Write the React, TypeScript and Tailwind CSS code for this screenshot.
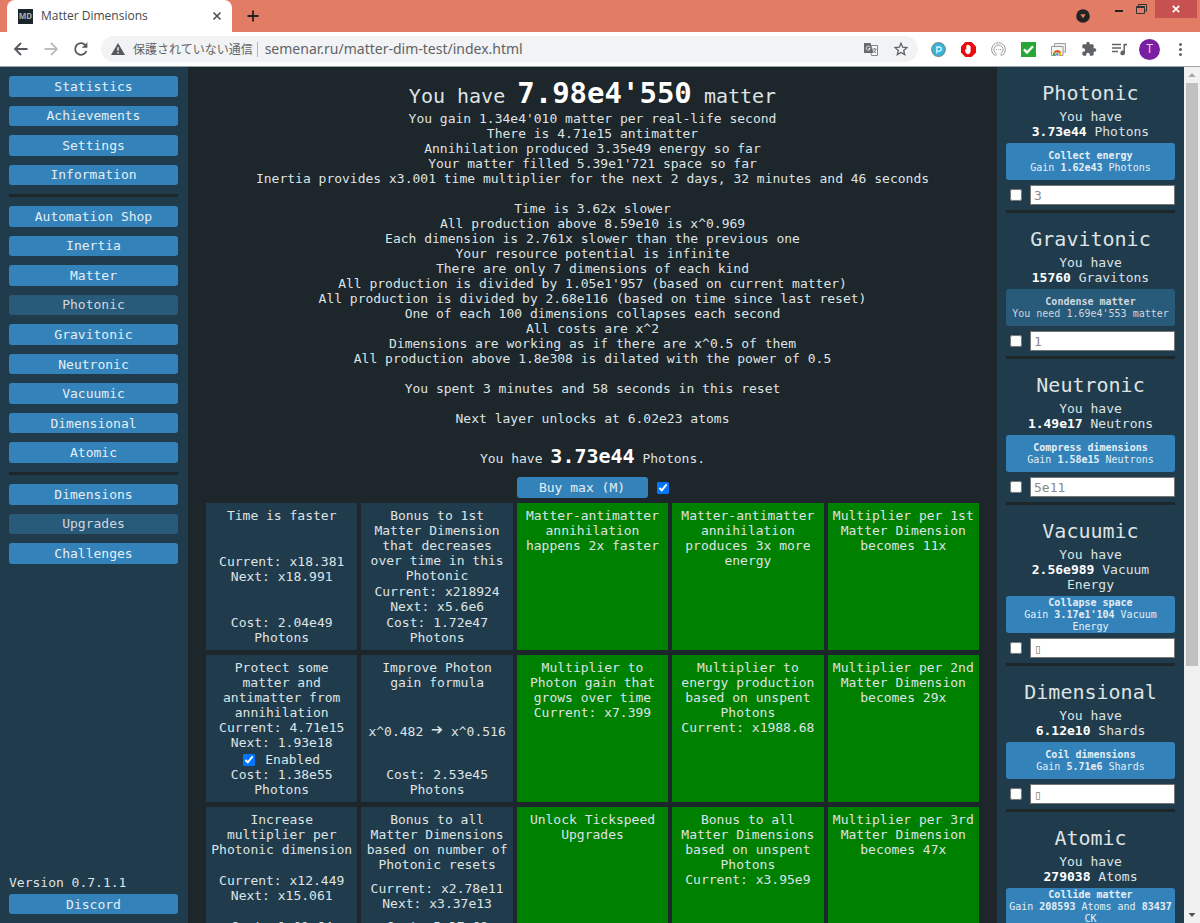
import React, { useState } from 'react';

const MONO = "font-['DejaVu_Sans_Mono','Liberation_Mono',monospace]";

const NAV_GROUPS = [
  { height: 'h-[109px] grid-rows-4', items: ['Statistics', 'Achievements', 'Settings', 'Information'] },
  {
    height: 'h-[257px] grid-rows-9',
    items: ['Automation Shop', 'Inertia', 'Matter', 'Photonic', 'Gravitonic', 'Neutronic', 'Vacuumic', 'Dimensional', 'Atomic'],
  },
  { height: 'h-[80px] grid-rows-3', items: ['Dimensions', 'Upgrades', 'Challenges'] },
];

// currently opened tabs
const ACTIVE = ['Photonic', 'Upgrades'];

const SUMMARY = [
  "You gain 1.34e4'010 matter per real-life second",
  'There is 4.71e15 antimatter',
  'Annihilation produced 3.35e49 energy so far',
  "Your matter filled 5.39e1'721 space so far",
  'Inertia provides x3.001 time multiplier for the next 2 days, 32 minutes and 46 seconds',
];

const EFFECTS = [
  'Time is 3.62x slower',
  'All production above 8.59e10 is x^0.969',
  'Each dimension is 2.761x slower than the previous one',
  'Your resource potential is infinite',
  'There are only 7 dimensions of each kind',
  "All production is divided by 1.05e1'957 (based on current matter)",
  'All production is divided by 2.68e116 (based on time since last reset)',
  'One of each 100 dimensions collapses each second',
  'All costs are x^2',
  'Dimensions are working as if there are x^0.5 of them',
  'All production above 1.8e308 is dilated with the power of 0.5',
];

interface Upgrade {
  title: string;
  effect?: React.ReactNode[];
  toggle?: boolean;
  cost?: string;
}

const UPGRADES: Upgrade[] = [
  { title: 'Time is faster', effect: ['Current: x18.381', 'Next: x18.991'], cost: '2.04e49' },
  { title: 'Bonus to 1st Matter Dimension that decreases over time in this Photonic', effect: ['Current: x218924', 'Next: x5.6e6'], cost: '1.72e47' },
  { title: 'Matter-antimatter annihilation happens 2x faster' },
  { title: 'Matter-antimatter annihilation produces 3x more energy' },
  { title: 'Multiplier per 1st Matter Dimension becomes 11x' },
  { title: 'Protect some matter and antimatter from annihilation', effect: ['Current: 4.71e15', 'Next: 1.93e18'], toggle: true, cost: '1.38e55' },
  { title: 'Improve Photon gain formula', effect: [<>x^0.482 <span className="text-xl font-bold leading-none">➔</span> x^0.516</>], cost: '2.53e45' },
  { title: 'Multiplier to Photon gain that grows over time', effect: ['Current: x7.399'] },
  { title: 'Multiplier to energy production based on unspent Photons', effect: ['Current: x1988.68'] },
  { title: 'Multiplier per 2nd Matter Dimension becomes 29x' },
  { title: 'Increase multiplier per Photonic dimension', effect: ['Current: x12.449', 'Next: x15.061'], cost: '1.01e64' },
  { title: 'Bonus to all Matter Dimensions based on number of Photonic resets', effect: ['Current: x2.78e11', 'Next: x3.37e13'], cost: '5.37e68' },
  { title: 'Unlock Tickspeed Upgrades' },
  { title: 'Bonus to all Matter Dimensions based on unspent Photons', effect: ['Current: x3.95e9'] },
  { title: 'Multiplier per 3rd Matter Dimension becomes 47x' },
];

interface Layer {
  name: string;
  amount: string;
  unit: string;
  action: string;
  detail: React.ReactNode;
  locked?: boolean;
  auto: string;
}

const LAYERS: Layer[] = [
  { name: 'Photonic', amount: '3.73e44', unit: 'Photons', action: 'Collect energy', detail: <>Gain <b>1.62e43</b> Photons</>, auto: '3' },
  { name: 'Gravitonic', amount: '15760', unit: 'Gravitons', action: 'Condense matter', detail: "You need 1.69e4'553 matter", locked: true, auto: '1' },
  { name: 'Neutronic', amount: '1.49e17', unit: 'Neutrons', action: 'Compress dimensions', detail: <>Gain <b>1.58e15</b> Neutrons</>, auto: '5e11' },
  { name: 'Vacuumic', amount: '2.56e989', unit: 'Vacuum Energy', action: 'Collapse space', detail: <>Gain <b>3.17e1'104</b> Vacuum Energy</>, auto: '▯' },
  { name: 'Dimensional', amount: '6.12e10', unit: 'Shards', action: 'Coil dimensions', detail: <>Gain <b>5.71e6</b> Shards</>, auto: '▯' },
  { name: 'Atomic', amount: '279038', unit: 'Atoms', action: 'Collide matter', detail: <>Gain <b>208593</b> Atoms and <b>83437</b> CK</>, auto: '1' },
];

const NavButton: React.FC<{ label: string; active?: boolean; className?: string }> = ({ label, active, className }) => (
  <button className={`flex w-full items-center justify-center rounded-[3px] text-[13px] leading-[15px] ${active ? 'bg-[#285a7a] text-[#d0d8dd]' : 'bg-[#3383ba] text-[#e4eef4]'} ${className || ''}`}>
    {label}
  </button>
);

const Divider = () => <hr className="h-[3px] w-full shrink-0 border-0 bg-[#1c262b]" />;

const TabBar = () => (
  <div className="flex h-8 items-stretch bg-[#e27c65]">
    <div className="ml-[7px] flex w-[225px] items-center rounded-t-lg bg-white pl-[11px] pr-[10px] text-[#45494d]">
      <span className="flex h-[15px] w-[15px] items-center justify-center bg-[#1b262c] text-[8px] font-bold text-[#a9b0b4]">MD</span>
      <span className="ml-2 flex-1 font-['Open_Sans',sans-serif] text-xs">Matter Dimensions</span>
      <button aria-label="Close tab">
        <svg viewBox="0 0 10 10" className="h-[10px] w-[10px]" stroke="#4a4d51" strokeWidth="1.6"><path d="M1.5 1.5l7 7M8.5 1.5l-7 7" /></svg>
      </button>
    </div>
    <button aria-label="New tab" className="ml-[15px] flex items-center">
      <svg viewBox="0 0 12 12" className="h-3 w-3" stroke="#222" strokeWidth="1.8"><path d="M6 .5v11M.5 6h11" /></svg>
    </button>
    <div className="flex-1" />
    <button aria-label="Tab search" className="mr-[22px] flex items-center">
      <svg viewBox="0 0 14 14" className="h-[14px] w-[14px]"><circle cx="7" cy="7" r="6.8" fill="#232323" /><path d="M4.2 5.3h5.6L7 9.2z" fill="#e27c65" /></svg>
    </button>
    <div className="flex h-[18px] items-center">
      <button aria-label="Minimize" className="flex h-full w-[13px] items-end justify-center pb-[6px]">
        <span className="h-[2px] w-2 bg-[#222]" />
      </button>
      <button aria-label="Restore" className="ml-[11px] mr-[8px] flex items-center">
        <svg viewBox="0 0 11 10" className="h-[10px] w-[11px]" fill="none" stroke="#333" strokeWidth="1"><path d="M2.5 2.5v-2h8v6.5h-2" /><path d="M.5 2.5h8v7h-8zM.5 3.5h8" /></svg>
      </button>
      <button aria-label="Close window" className="mr-[3px] flex h-full w-[42px] items-center justify-center bg-[#c75050]">
        <svg viewBox="0 0 8 8" className="h-2 w-2" stroke="#fff" strokeWidth="1.7"><path d="M.8.8l6.4 6.4M7.2.8L.8 7.2" /></svg>
      </button>
    </div>
  </div>
);

const ToolBar = () => (
  <div className="flex h-[35px] items-center border-b border-[#9aa3a8] bg-white pl-[13px] pr-[18px]">
    <button aria-label="Back">
      <svg viewBox="0 0 16 16" className="h-4 w-4" fill="none" stroke="#55585c" strokeWidth="1.8"><path d="M14.5 8H2M8 2L2 8l6 6" /></svg>
    </button>
    <button aria-label="Forward" className="ml-[14px]">
      <svg viewBox="0 0 16 16" className="h-4 w-4" fill="none" stroke="#babcbe" strokeWidth="1.8"><path d="M1.5 8H14M8 2l6 6-6 6" /></svg>
    </button>
    <button aria-label="Reload" className="ml-[14px]">
      <svg viewBox="0 0 16 16" className="h-4 w-4"><path d="M13.4 10A5.8 5.8 0 1 1 12.2 4" fill="none" stroke="#55585c" strokeWidth="1.8" /><path d="M14.4 1.2v5.6H8.8z" fill="#55585c" /></svg>
    </button>
    <div className="ml-3 flex h-[26px] flex-1 items-center rounded-full bg-[#f1f3f4] pl-[10px] pr-[10px]">
      <svg viewBox="0 0 14 12" className="h-3 w-[14px]"><path d="M7 0l7 12H0z" fill="#55585c" /><path d="M6.3 4.2h1.4v3.6H6.3zM6.3 9h1.4v1.4H6.3z" fill="#f1f3f4" /></svg>
      <span className="ml-2 font-['Noto_Sans_CJK_JP',sans-serif] text-xs text-[#5f6368]">保護されていない通信</span>
      <span className="ml-1 h-[15px] w-px bg-[#b5b8bb]" />
      <input
        aria-label="Address"
        readOnly
        value="semenar.ru/matter-dim-test/index.html"
        className="ml-[7px] min-w-0 flex-1 bg-transparent text-sm text-[#5f6368] outline-none"
      />
      <svg viewBox="0 0 14 14" className="h-[14px] w-[14px]">
        <path d="M5.5 3.5h8v10h-6z" fill="#f8f8f8" stroke="#86898c" />
        <path d="M0 1h6.5l3 10H0z" fill="#66696d" />
        <path d="M6 5.2A2 2 0 1 0 6.2 6.6H4.5" fill="none" stroke="#f1f3f4" strokeWidth="1" />
        <path d="M8.5 7h4M10.5 6v1M12 7c-.5 2-1.5 3-2.5 4M9.5 8c.6 1.4 1.5 2.3 2.7 3" fill="none" stroke="#77797c" strokeWidth=".9" />
      </svg>
      <svg viewBox="0 0 14 14" className="ml-4 h-[14px] w-[14px]" fill="none" stroke="#5f6368" strokeWidth="1.3"><path d="M7 1.2l1.7 4 4.3.4-3.3 2.8 1 4.2L7 10.4 3.3 12.6l1-4.2L1 5.6l4.3-.4z" /></svg>
    </div>
    <div className="ml-[13px] flex items-center gap-[15px]">
      <svg viewBox="0 0 15 15" className="h-[15px] w-[15px]">
        <circle cx="7.5" cy="7.5" r="6.8" fill="#35b5dc" stroke="#6d8e99" strokeWidth="1.2" />
        <path d="M5.8 11.5V5h2.4a2.1 2.1 0 0 1 0 4.2H6" fill="none" stroke="#d9f6ff" strokeWidth="1.3" />
      </svg>
      <svg viewBox="0 0 15 15" className="h-[15px] w-[15px]">
        <path d="M4.4 0h6.2L15 4.4v6.2L10.6 15H4.4L0 10.6V4.4z" fill="#ea0b0f" />
        <path d="M4 7.5c.6-.5 1 0 1.3.6V3.8c0-.8 1-.8 1 0V3c0-.8 1.100-.8 1.100 0v.5c0-.8 1.100-.8 1.100 0v.8c0-.7 1.100-.7 1.100 0v4.800c0 2-1.100 3.100-2.700 3.100-1.900 0-2.600-1.800-2.900-4.700z" fill="#fff" />
      </svg>
      <svg viewBox="0 0 15 15" className="h-[15px] w-[15px]" fill="none" stroke="#9b9b9b">
        <path d="M4.5 13.8a6.9 6.9 0 1 1 6 0" />
        <path d="M5 11.5a4.6 4.6 0 1 1 5 0v2" />
        <path d="M5 11.5v2M5 7.5h1M7 7.5h1M9 7.5h1" />
      </svg>
      <svg viewBox="0 0 15 15" className="h-[15px] w-[15px]"><path d="M0 0h15v15H0z" fill="#27a737" /><path d="M3 7.4l3 3.2 6-6.4" fill="none" stroke="#fff" strokeWidth="2.4" /></svg>
      <svg viewBox="0 0 15 15" className="h-[15px] w-[15px]">
        <path d="M3.5 4V1.5h11V10H12" fill="#eee" stroke="#a0a0a0" />
        <path d="M.5 4.5h11.5v9H.5z" fill="#f5f5f5" stroke="#999" />
        <path d="M2.2 13.5v-1.2a4.1 4.1 0 0 1 8.2 0v1.2z" fill="#f2b90f" />
        <path d="M2.7 10.5a4.1 4.1 0 0 1 7.3 0z" fill="#db4437" />
        <path d="M2.2 13.5v-1.2c0-.7.2-1.3.5-1.8L5 13.5z" fill="#0f9d58" />
        <circle cx="6.3" cy="12.2" r="1.6" fill="#4285f4" stroke="#fff" strokeWidth=".6" />
      </svg>
      <svg viewBox="0 0 24 24" className="h-4 w-4" fill="#5f6368"><path d="M20.5 11H19V7c0-1.1-.9-2-2-2h-4V3.5a2.5 2.5 0 0 0-5 0V5H4c-1.1 0-2 .9-2 2v3.8h1.5a2.7 2.7 0 0 1 0 5.4H2V20c0 1.1.9 2 2 2h3.8v-1.5a2.7 2.7 0 0 1 5.4 0V22H17c1.1 0 2-.9 2-2v-4h1.5a2.5 2.5 0 0 0 0-5z" /></svg>
      <svg viewBox="0 0 15 13" className="h-[13px] w-[15px]"><path d="M0 1.5h9M0 5h9M0 8.5h6" stroke="#5f6368" strokeWidth="1.5" /><path d="M15 .8h-3.5v7a2.3 2.3 0 1 0 1.5 2.2V2.4h2z" fill="#5f6368" /></svg>
      <button className="-ml-[3px] mr-1 flex h-[21px] w-[21px] items-center justify-center rounded-full bg-[#7b1fa2] text-xs text-[#e8d5f0]">T</button>
      <svg viewBox="0 0 3 13" className="h-[13px] w-[3px]" fill="#5f6368"><circle cx="1.5" cy="1.5" r="1.5" /><circle cx="1.5" cy="6.5" r="1.5" /><circle cx="1.5" cy="11.5" r="1.5" /></svg>
    </div>
  </div>
);

const SideNav = () => (
  <nav className="flex w-[188px] shrink-0 flex-col gap-[9px] bg-[#203c4c] py-[9px] pl-[9px] pr-[10px]">
    {NAV_GROUPS.map((group, i) => (
      <React.Fragment key={group.items[0]}>
        {i > 0 && <Divider />}
        <div className={`grid w-full shrink-0 gap-[9px] ${group.height}`}>
          {group.items.map(item => (
            <NavButton key={item} label={item} active={ACTIVE.includes(item)} />
          ))}
        </div>
      </React.Fragment>
    ))}
    <div className="mt-auto">
      <p className="mb-1 text-[#dfe3e5]">Version 0.7.1.1</p>
      <NavButton label="Discord" className="h-5" />
    </div>
  </nav>
);

const UpgradeCell: React.FC<{ upgrade: Upgrade }> = ({ upgrade }) => {
  const [enabled, setEnabled] = useState(true);
  const bought = !upgrade.cost;

  return (
    <div className={`flex h-[147px] flex-col px-1 py-[5px] ${bought ? 'bg-[#008000]' : 'justify-between bg-[#203c4c]'}`}>
      <p>{upgrade.title}</p>
      {upgrade.effect && (
        <div>
          {upgrade.effect.map((line, i) => <p key={i} className="whitespace-nowrap">{line}</p>)}
        </div>
      )}
      {upgrade.toggle && (
        <label className="flex items-center justify-center gap-[10px] pt-[2px]">
          <input type="checkbox" checked={enabled} onChange={() => setEnabled(!enabled)} className="h-3 w-3" />
          Enabled
        </label>
      )}
      {upgrade.cost && <p>Cost: {upgrade.cost}<br />Photons</p>}
    </div>
  );
};

const LayerPanel: React.FC<{ layer: Layer }> = ({ layer }) => (
  <section className="flex flex-col pt-[13px]">
    <h2 className="text-xl leading-[26px]">{layer.name}</h2>
    <p className="mt-[3px]">You have<br /><b className="text-white">{layer.amount}</b> {layer.unit}</p>
    <button className={`mt-1 flex h-[37px] flex-col items-center justify-center rounded-[3px] px-[2px] text-[10px] leading-[12px] ${layer.locked ? 'bg-[#285a7a] text-[#d0d8dd]' : 'bg-[#3383ba] text-[#e4eef4]'}`}>
      <b>{layer.action}</b>
      <span>{layer.detail}</span>
    </button>
    <div className="mb-[5px] mt-[5px] flex items-center">
      <input type="checkbox" aria-label={`Automate ${layer.name}`} className="ml-1 h-3 w-3" />
      <input
        type="text"
        aria-label={`${layer.name} threshold`}
        placeholder={layer.auto}
        className="ml-2 h-5 min-w-0 flex-1 border border-[#767676] bg-white px-[3px] text-[13px] text-black placeholder:text-[#8a8a8a]"
      />
    </div>
    <Divider />
  </section>
);

const ScrollBar = () => (
  <div className="flex w-4 shrink-0 flex-col items-center bg-[#f1f1f1]">
    <svg viewBox="0 0 16 16" className="h-4 w-4 shrink-0"><path d="M8 6l3.5 4h-7z" fill="#a3a3a3" /></svg>
    <div className="h-[583px] w-3 bg-[#c1c1c1]" />
    <svg viewBox="0 0 16 16" className="mt-auto h-4 w-4 shrink-0"><path d="M8 10l3.5-4h-7z" fill="#505050" /></svg>
  </div>
);

const App: React.FC = () => {
  const [buyMax, setBuyMax] = useState(true);

  return (
    <div className="flex h-screen flex-col overflow-hidden font-['Noto_Sans','Liberation_Sans',sans-serif]">
      <header className="shrink-0">
        <TabBar />
        <ToolBar />
      </header>
      <div className={`flex min-h-0 flex-1 bg-[#1c262b] text-[13px] leading-[15px] text-[#dfe3e5] ${MONO}`}>
        <SideNav />
        <main className="min-w-0 flex-1 overflow-hidden px-[18px] pt-3 text-center">
          <h1 className="-mb-px text-xl leading-8">
            You have <b className="text-[29px] leading-none text-white">7.98e4'550</b> matter
          </h1>
          {SUMMARY.map(line => <p key={line}>{line}</p>)}
          <div className="mt-[15px]">
            {EFFECTS.map(line => <p key={line}>{line}</p>)}
          </div>
          <p className="mt-[15px]">You spent 3 minutes and 58 seconds in this reset</p>
          <p className="mt-[15px]">Next layer unlocks at 6.02e23 atoms</p>
          <p className="mt-5 leading-6">
            You have <b className="text-xl leading-none text-white">3.73e44</b> Photons.
          </p>
          <div className="mb-[5px] mt-[6px] flex items-center justify-center gap-[9px]">
            <button className="h-[21px] w-[131px] rounded-[3px] bg-[#3383ba] text-[#e4eef4]">Buy max (M)</button>
            <input type="checkbox" aria-label="Buy max" checked={buyMax} onChange={() => setBuyMax(!buyMax)} className="h-3 w-3" />
          </div>
          <div className="grid grid-cols-5 gap-x-1 gap-y-[5px]">
            {UPGRADES.map(upgrade => <UpgradeCell key={upgrade.title} upgrade={upgrade} />)}
          </div>
        </main>
        <aside className="w-[187px] shrink-0 overflow-hidden bg-[#203c4c] px-[9px] text-center">
          {LAYERS.map(layer => <LayerPanel key={layer.name} layer={layer} />)}
        </aside>
        <ScrollBar />
      </div>
    </div>
  );
};

export default App;
